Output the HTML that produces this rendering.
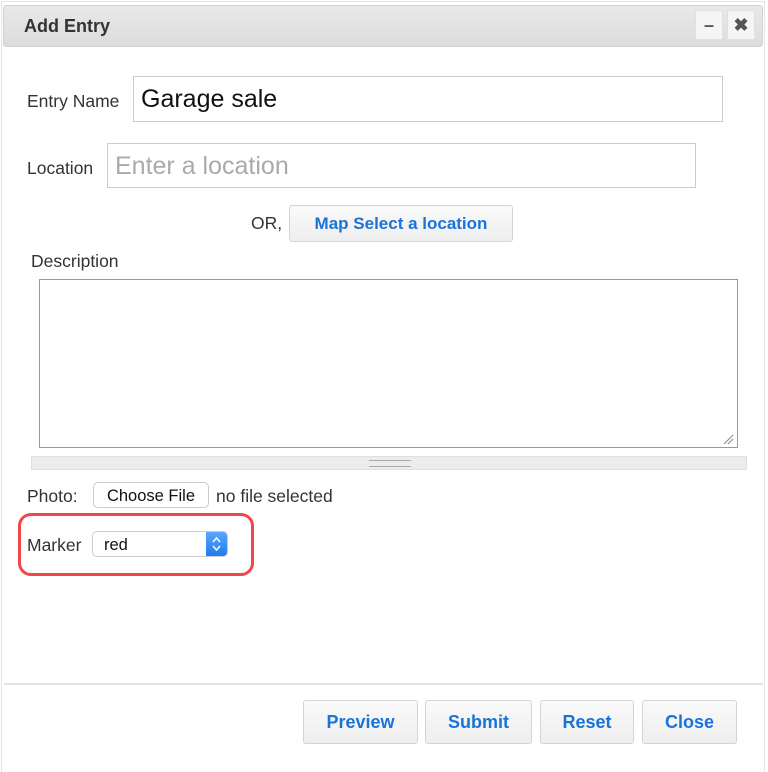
<!DOCTYPE html>
<html><head><style>
body{margin:0;width:768px;height:763px;background:#fff;font-family:"Liberation Sans",sans-serif;position:relative;overflow:hidden}
.a{position:absolute}
.dlg{left:1px;top:1px;width:762px;height:770px;border:1px solid #e4e4e4;border-bottom:none}
.title{left:3px;top:5px;width:760px;height:42px;background:linear-gradient(#e9e9e9,#dcdcdc);border:1px solid #d2d2d2;border-radius:3px;box-sizing:border-box}
.tb{width:28px;height:30px;background:#f5f5f5;border:1px solid #e0e0e0;box-sizing:border-box;font-weight:bold;color:#555;text-align:center;line-height:28px;font-size:18px}
.lbl{font-size:17.5px;color:#333}
.inp{border:1px solid #ccc;box-sizing:border-box;background:#fff}
.btn{background:linear-gradient(#fafafa,#eee);border:1px solid #d4d4d4;border-radius:3px;box-sizing:border-box;color:#1a73d9;font-weight:bold;font-size:18px;text-align:center}
</style></head><body>
<div class="a dlg"></div>
<div class="a title"></div>
<div class="a" style="left:24px;top:16px;font-size:18px;font-weight:bold;color:#333">Add Entry</div>
<div class="a tb" style="left:695px;top:10px">–</div>
<div class="a tb" style="left:727px;top:10px">✖</div>

<div class="a lbl" style="left:27px;top:91px">Entry Name</div>
<div class="a inp" style="left:133px;top:76px;width:590px;height:46px;font-size:25px;padding:8px 0 0 7px;color:#111">Garage sale</div>

<div class="a lbl" style="left:27px;top:158px">Location</div>
<div class="a inp" style="left:107px;top:143px;width:589px;height:45px;font-size:25px;padding:8px 0 0 7px;color:#aaa">Enter a location</div>

<div class="a lbl" style="left:251px;top:213px">OR,</div>
<div class="a btn" style="left:289px;top:205px;width:224px;height:37px;line-height:36px;font-size:17px">Map Select a location</div>

<div class="a lbl" style="left:31px;top:251px">Description</div>
<div class="a" style="left:39px;top:279px;width:699px;height:169px;border:1px solid #999;box-sizing:border-box"></div>
<svg class="a" style="left:722px;top:433px" width="12" height="12"><path d="M2 11L11 2M6 11L11 6" stroke="#888" stroke-width="1"/></svg>
<div class="a" style="left:31px;top:456px;width:716px;height:14px;background:#ececec;border:1px solid #e0e0e0;box-sizing:border-box"></div>
<div class="a" style="left:369px;top:460px;width:42px;height:5px;border-top:1px solid #aaa;border-bottom:1px solid #aaa"></div>

<div class="a lbl" style="left:27px;top:486px">Photo:</div>
<div class="a" style="left:93px;top:482px;width:116px;height:26px;border:1px solid #ccc;border-radius:5px;box-sizing:border-box;font-size:16.5px;text-align:center;line-height:26px;color:#111">Choose File</div>
<div class="a lbl" style="left:216px;top:486px">no file selected</div>

<div class="a" style="left:18px;top:513px;width:236px;height:63px;border:3px solid #f0474a;border-radius:13px;box-sizing:border-box"></div>
<div class="a lbl" style="left:27px;top:535px">Marker</div>
<div class="a" style="left:92px;top:531px;width:136px;height:26px;border:1px solid #ccc;border-radius:5px;box-sizing:border-box;font-size:16.5px;line-height:26px;padding-left:11px;color:#111;overflow:hidden">red
<div class="a" style="right:0;top:0;width:21px;height:24px;background:linear-gradient(#5aa7fb,#1d7cf2)"><svg width="21" height="24"><path d="M7 10l3.5-4 3.5 4M7 14l3.5 4 3.5-4" stroke="#fff" stroke-width="1.5" fill="none"/></svg></div></div>

<div class="a" style="left:4px;top:683px;width:759px;height:2px;background:#e2e2e2"></div>
<div class="a btn" style="left:303px;top:700px;width:115px;height:44px;line-height:43px">Preview</div>
<div class="a btn" style="left:425px;top:700px;width:107px;height:44px;line-height:43px">Submit</div>
<div class="a btn" style="left:540px;top:700px;width:94px;height:44px;line-height:43px">Reset</div>
<div class="a btn" style="left:642px;top:700px;width:95px;height:44px;line-height:43px">Close</div>
</body></html>
